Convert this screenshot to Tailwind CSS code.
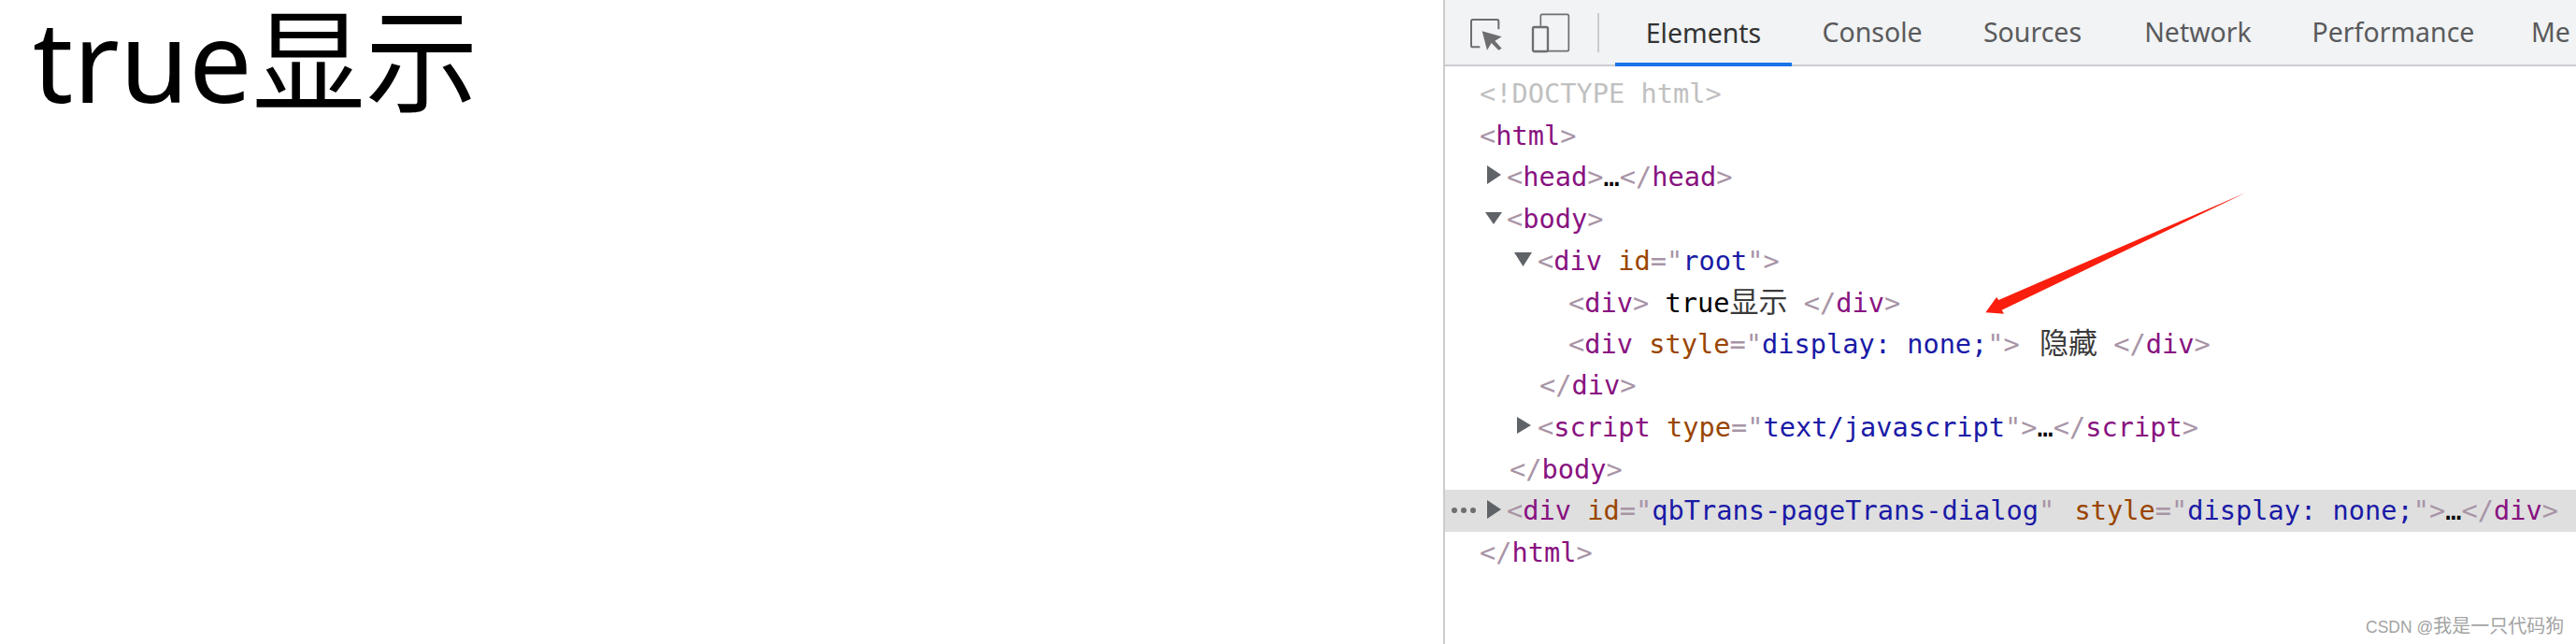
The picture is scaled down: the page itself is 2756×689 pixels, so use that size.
<!DOCTYPE html>
<html>
<head>
<meta charset="utf-8">
<script src="https://cdn.jsdelivr.net/npm/@tailwindcss/browser@4"></script>
</head>
<body class="bg-white">
<div class="relative flex h-[689px] w-[2756px] overflow-hidden bg-white">
  <div class="h-full w-[1544px] pl-[35px] font-['Noto_Sans','Noto_Sans_CJK_SC',sans-serif] text-[120px] leading-[116px] whitespace-nowrap text-black">true<span class="font-['Noto_Sans_CJK_SC',sans-serif] text-[121px]">显示</span></div>
  <div class="flex h-full w-[1212px] flex-col border-l-2 border-[#cccccc]">
    <div class="flex h-[71px] shrink-0 items-center border-b-2 border-[#cbcdd1] bg-[#f1f3f4] pl-[24px]">
      <svg class="h-[44px] w-[40px] shrink-0" viewBox="75 36 120 132" fill="none"><path d="M115 148H92a5 5 0 0 1-5-5V65a5 5 0 0 1 5-5h78a5 5 0 0 1 5 5v26" stroke="#6e6e70" stroke-width="6"/><path d="M122 97l63 18-22 13 22 24-10 6-23-23-14 23z" fill="#6e6e70"/></svg>
      <svg class="ml-[27px] h-[48px] w-[44px] shrink-0" viewBox="282 30 132 144" fill="none"><path d="M316 80V48a5 5 0 0 1 5-5h80a5 5 0 0 1 5 5v108a5 5 0 0 1-5 5h-64" stroke="#6e6e70" stroke-width="5"/><rect x="291" y="84" width="48" height="78" rx="5" stroke="#6e6e70" stroke-width="7"/></svg>
      <div class="ml-[28px] h-[42px] w-[2px] shrink-0 bg-[#c9cbcf]"></div>
      <div class="ml-[17px] flex h-[69px] items-center font-['Noto_Sans',sans-serif] text-[28.5px] whitespace-nowrap text-[#5a5a5c]">
        <div class="flex h-[71px] w-[189px] translate-y-[1px] items-center justify-center border-b-[4px] border-[#1a73e8] pt-[3px] text-[#333333]">Elements</div>
        <div class="flex h-[69px] w-[172px] items-center justify-center">Console</div>
        <div class="flex h-[69px] w-[171px] items-center justify-center">Sources</div>
        <div class="flex h-[69px] w-[183px] items-center justify-center">Network</div>
        <div class="flex h-[69px] w-[235px] items-center justify-center">Performance</div>
        <div class="ml-[30px] flex h-[69px] items-center">Me</div>
      </div>
    </div>
    <div class="pt-[7px] font-['DejaVu_Sans_Mono','Noto_Sans_CJK_SC',monospace] text-[28.65px]">
      <div class="flex h-[44.6px] items-center pl-[37px] whitespace-pre text-[#c0c0c0]"><span class="pt-[1px]">&lt;!DOCTYPE html&gt;</span></div>
      <div class="flex h-[44.6px] items-center pl-[37px] whitespace-pre"><span class="pt-[1px]"><span class="text-[#a894a6]">&lt;</span><span class="text-[#881280]">html</span><span class="text-[#a894a6]">&gt;</span></span></div>
      <div class="flex h-[44.6px] items-center pl-[45px] whitespace-pre">
        <svg class="mr-[6px] mb-[5px] h-[20px] w-[15px] shrink-0" viewBox="0 0 15 20"><path d="M0 0l15 10L0 20z" fill="#5f6368"/></svg>
        <span class="pt-[1px]"><span class="text-[#a894a6]">&lt;</span><span class="text-[#881280]">head</span><span class="text-[#a894a6]">&gt;</span><span class="text-black">…</span><span class="text-[#a894a6]">&lt;/</span><span class="text-[#881280]">head</span><span class="text-[#a894a6]">&gt;</span></span>
      </div>
      <div class="flex h-[44.6px] items-center pl-[43px] whitespace-pre">
        <svg class="mr-[5px] mb-[2px] h-[13px] w-[18px] shrink-0" viewBox="0 0 18 13"><path d="M0 0h18L9 13z" fill="#5f6368"/></svg>
        <span class="pt-[1px]"><span class="text-[#a894a6]">&lt;</span><span class="text-[#881280]">body</span><span class="text-[#a894a6]">&gt;</span></span>
      </div>
      <div class="flex h-[44.6px] items-center pl-[74px] whitespace-pre">
        <svg class="mr-[6px] mb-[2px] h-[15px] w-[19px] shrink-0" viewBox="0 0 19 15"><path d="M0 0h19L9.500 15z" fill="#5f6368"/></svg>
        <span class="pt-[1px]"><span class="text-[#a894a6]">&lt;</span><span class="text-[#881280]">div</span> <span class="text-[#994500]">id</span><span class="text-[#a894a6]">="</span><span class="text-[#1a1aa6]">root</span><span class="text-[#a894a6]">"&gt;</span></span>
      </div>
      <div class="flex h-[44.6px] items-center pl-[132px] whitespace-pre"><span class="pb-[1px]"><span class="text-[#a894a6]">&lt;</span><span class="text-[#881280]">div</span><span class="text-[#a894a6]">&gt;</span><span class="text-black"> true<span class="text-[31px] text-[#3a3a3a]">显示</span> </span><span class="text-[#a894a6]">&lt;/</span><span class="text-[#881280]">div</span><span class="text-[#a894a6]">&gt;</span></span></div>
      <div class="flex h-[44.6px] items-center pl-[132px] whitespace-pre"><span class="pb-[1px]"><span class="text-[#a894a6]">&lt;</span><span class="text-[#881280]">div</span> <span class="text-[#994500]">style</span><span class="text-[#a894a6]">="</span><span class="text-[#1a1aa6]">display: none;</span><span class="text-[#a894a6]">"&gt;</span><span class="text-black"> <span class="ml-[4px] text-[31px] text-[#3a3a3a]">隐藏</span> </span><span class="text-[#a894a6]">&lt;/</span><span class="text-[#881280]">div</span><span class="text-[#a894a6]">&gt;</span></span></div>
      <div class="flex h-[44.6px] items-center pl-[101px] whitespace-pre"><span class="pt-[1px]"><span class="text-[#a894a6]">&lt;/</span><span class="text-[#881280]">div</span><span class="text-[#a894a6]">&gt;</span></span></div>
      <div class="flex h-[44.6px] items-center pl-[77px] whitespace-pre">
        <svg class="mr-[7px] mb-[4px] h-[18px] w-[15px] shrink-0" viewBox="0 0 15 18"><path d="M0 0l15 9L0 18z" fill="#5f6368"/></svg>
        <span class="pt-[1px]"><span class="text-[#a894a6]">&lt;</span><span class="text-[#881280]">script</span> <span class="text-[#994500]">type</span><span class="text-[#a894a6]">="</span><span class="text-[#1a1aa6]">text/javascript</span><span class="text-[#a894a6]">"&gt;</span><span class="text-black">…</span><span class="text-[#a894a6]">&lt;/</span><span class="text-[#881280]">script</span><span class="text-[#a894a6]">&gt;</span></span>
      </div>
      <div class="flex h-[44.6px] items-center pl-[69px] whitespace-pre"><span class="pt-[1px]"><span class="text-[#a894a6]">&lt;/</span><span class="text-[#881280]">body</span><span class="text-[#a894a6]">&gt;</span></span></div>
      <div class="flex h-[44.6px] items-center bg-[#dfdfdf] pl-[7px] whitespace-pre">
        <div class="flex w-[38px] shrink-0 gap-[4px]"><span class="h-[6px] w-[6px] rounded-full bg-[#6e6e70]"></span><span class="h-[6px] w-[6px] rounded-full bg-[#6e6e70]"></span><span class="h-[6px] w-[6px] rounded-full bg-[#6e6e70]"></span></div>
        <svg class="mr-[6px] mb-[3px] h-[20px] w-[15px] shrink-0" viewBox="0 0 15 20"><path d="M0 0l15 10L0 20z" fill="#5f6368"/></svg>
        <span class="pt-[1px]"><span class="text-[#a894a6]">&lt;</span><span class="text-[#881280]">div</span> <span class="text-[#994500]">id</span><span class="text-[#a894a6]">="</span><span class="text-[#1a1aa6]">qbTrans-pageTrans-dialog</span><span class="text-[#a894a6]">"</span> <span class="ml-[4px] text-[#994500]">style</span><span class="text-[#a894a6]">="</span><span class="text-[#1a1aa6]">display: none;</span><span class="text-[#a894a6]">"&gt;</span><span class="text-black">…</span><span class="text-[#a894a6]">&lt;/</span><span class="text-[#881280]">div</span><span class="text-[#a894a6]">&gt;</span></span>
      </div>
      <div class="flex h-[44.6px] items-center pl-[37px] whitespace-pre"><span class="pt-[1px]"><span class="text-[#a894a6]">&lt;/</span><span class="text-[#881280]">html</span><span class="text-[#a894a6]">&gt;</span></span></div>
    </div>
  </div>
  <svg class="absolute left-[2100px] top-[190px] h-[160px] w-[320px]" viewBox="0 0 320 160"><path d="M303 16L38.300 131 36 128 24.300 144.300 44 145.700 41.700 141.700z" fill="#fa1e0e"/></svg>
  <div class="absolute left-[2531px] top-[658px] whitespace-pre font-['Liberation_Sans','Noto_Sans_CJK_SC',sans-serif] leading-[24px] text-[#a3a3a3]"><span class="text-[17.5px]">CSDN @</span><span class="text-[20px]">我是一只代码狗</span></div>
</div>
</body>
</html>
